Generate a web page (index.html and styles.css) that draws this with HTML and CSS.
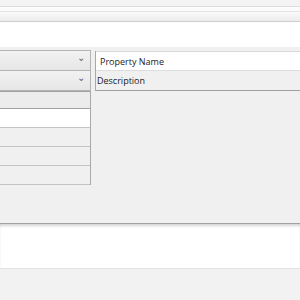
FILE: index.html
```html
<!DOCTYPE html>
<html>
<head>
<meta charset="utf-8">
<link rel="stylesheet" href="styles.css">
</head>
<body>
<div class="topbar"></div>
<div class="gap"></div>
<div class="toolbar"></div>
<div class="white-top"></div>
<div class="panel">
  <div class="left">
    <div class="combo"><span class="chev">&#8964;</span></div>
    <div class="combo"><span class="chev">&#8964;</span></div>
    <div class="grid">
      <div class="row head"></div>
      <div class="row sel"></div>
      <div class="row"></div>
      <div class="row"></div>
      <div class="row"></div>
    </div>
  </div>
  <div class="right">
    <div class="prop">
      <div class="name">Property Name</div>
      <div class="desc">Description</div>
    </div>
  </div>
</div>
<div class="white-bottom"></div>
<div class="footer"></div>
</body>
</html>
```
FILE: styles.css
```css
html, body {
  margin: 0;
  padding: 0;
  background: #ffffff;
  width: 300px;
  height: 300px;
  overflow: hidden;
  font-family: "Open Sans", "Noto Sans", sans-serif;
}
.topbar {
  height: 6px;
  background: #f3f3f3;
  border-bottom: 1px solid #dedede;
}
.gap {
  height: 4px;
  background: #fbfbfb;
}
.toolbar {
  height: 9px;
  background: linear-gradient(#fafafa, #ececec);
  border-top: 1px solid #e4e4e4;
  border-bottom: 1px solid #cfcfcf;
}
.white-top {
  height: 25px;
  background: #ffffff;
}
.panel {
  height: 176px;
  background: #f0f0f0;
  display: flex;
  gap: 4px;
  padding-top: 3px;
  box-sizing: border-box;
}
.left {
  width: 91px;
  display: flex;
  flex-direction: column;
}
.combo {
  height: 19px;
  border: 1px solid #b4b4b4;
  border-left: none;
  border-bottom: none;
  background: linear-gradient(#f2f2f2, #e6e6e6);
  position: relative;
}
.combo + .combo {
  border-bottom: 1px solid #b4b4b4;
}
.chev {
  position: absolute;
  right: 5px;
  top: -1px;
  font-size: 10px;
  color: #606060;
  line-height: 14px;
}
.grid {
  display: flex;
  flex-direction: column;
  border-right: 1px solid #a8a8a8;
}
.row {
  height: 18px;
  border-bottom: 1px solid #c4c4c4;
  background: #f0f0f0;
}
.row.head {
  height: 16px;
  border: 1px solid #a0a0a0;
  border-left: none;
  border-right: none;
  background: #ececec;
}
.row.sel {
  background: #ffffff;
}
.right {
  flex: 1;
}
.prop {
  border-left: 1px solid #a8a8a8;
  border-bottom: 1px solid #a0a0a0;
  margin-top: 1px;
}
.name {
  height: 18px;
  background: #ffffff;
  border-top: 1px solid #d8d8d8;
  border-bottom: 1px solid #dddddd;
  font-size: 9px;
  line-height: 20px;
  padding-left: 4px;
  color: #1a1a1a;
}
.desc {
  height: 19px;
  font-size: 9px;
  line-height: 20px;
  padding-left: 1px;
  color: #1a1a1a;
  background: #f0f0f0;
}
.white-bottom {
  height: 45px;
  background: #ffffff;
  border-top: 1px solid #a0a0a0;
  box-shadow: inset 0 3px 3px -1px #d4d4d4;
  box-sizing: border-box;
}
.footer {
  height: 31px;
  background: #f2f2f2;
  border-top: 1px solid #e2e2e2;
}
```
